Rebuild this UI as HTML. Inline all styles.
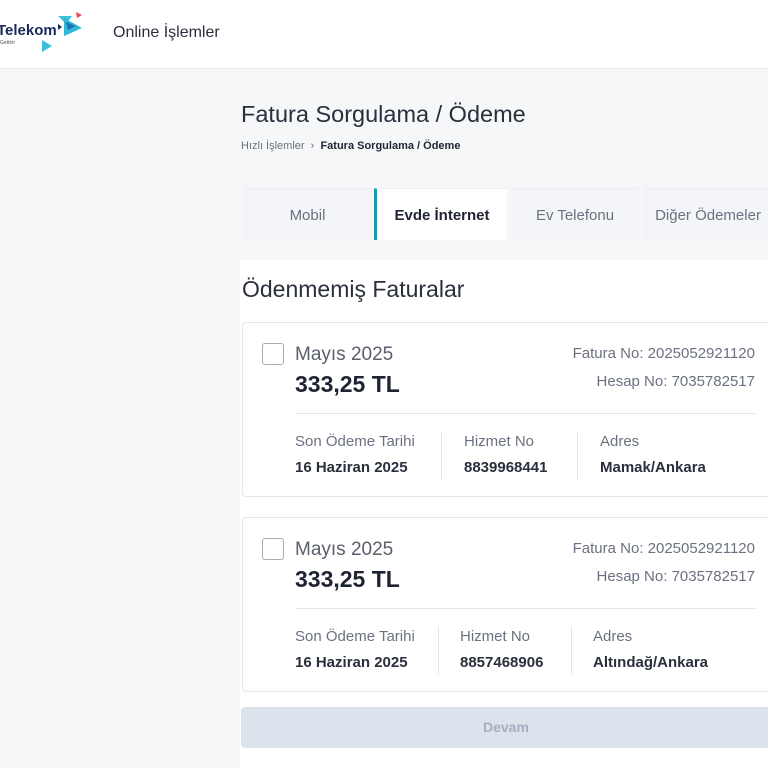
<!DOCTYPE html>
<html><head><meta charset="utf-8"><style>
*{margin:0;padding:0;box-sizing:border-box}
body{width:768px;height:768px;overflow:hidden;background:#f6f7f9;font-family:"Liberation Sans",sans-serif;color:#2a2f3c;position:relative}
.a{position:absolute;white-space:nowrap}
.hdr{left:0;top:0;width:768px;height:69px;background:#fff;border-bottom:1px solid #e6e8ec}
.tab{top:188px;height:52px;background:#f3f5f8;color:#6b7180;font-size:15px;text-align:center;line-height:54px;border-top:1px solid #eceef1}
.card{left:242px;width:540px;height:175px;background:#fff;border:1px solid #e3e6ea;border-radius:4px}
.cb{left:19px;top:20px;width:22px;height:22px;border:1.5px solid #a6abb5;border-radius:3px}
.m{left:52px;top:21px;font-size:19px;color:#5a5f6b}
.p{left:52px;top:48px;font-size:23px;font-weight:bold;color:#1f2433}
.r{right:26px;font-size:15px;color:#6b7180;text-align:right}
.hr{left:52px;top:90px;width:461px;height:1px;background:#e3e6ea}
.l{font-size:15px;color:#6b7180;top:110px}
.v{font-size:15px;color:#2a2f3c;top:136px;font-weight:bold}
.vl{top:108px;width:1px;height:48px;background:#e3e6ea}
</style></head><body>
<div class="a hdr"></div>
<div class="a" style="left:-3px;top:22px;font-size:15px;font-weight:bold;color:#1a2a5a">Telekom</div>
<div class="a" style="left:0;top:40px;font-size:5px;color:#555">Gettirir</div>
<svg class="a" style="left:50px;top:10px" width="36" height="44"><polygon points="8,6 22,6 16,14" fill="#3cc0d8"/><polygon points="14,8 32,18 14,26" fill="#2fb7d4"/><polygon points="16,12 26,16 18,20" fill="#1d72b8"/><polygon points="26,2 32,5 27,8" fill="#e84a5f"/><polygon points="8,14 12,17 8,20" fill="#1a2a5a"/></svg>
<svg class="a" style="left:42px;top:38px" width="12" height="16"><polygon points="0,2 10,8 0,14" fill="#3cc0d8"/></svg>
<div class="a" style="left:113px;top:24px;font-size:16px;color:#2a2f3c">Online İşlemler</div>
<div class="a" style="left:241px;top:101px;font-size:23.5px;color:#2a2f3c">Fatura Sorgulama / Ödeme</div>
<div class="a" style="left:241px;top:140px;font-size:11px;color:#6b7180">Hızlı İşlemler &nbsp;›&nbsp; <b style="color:#1f2433">Fatura Sorgulama / Ödeme</b></div>
<div class="a tab" style="left:243px;width:129px">Mobil</div>
<div class="a tab" style="left:374px;width:133px;background:#fff;border-left:3px solid #1b9aaa;color:#1f2433;font-weight:bold">Evde İnternet</div>
<div class="a tab" style="left:511px;width:128px">Ev Telefonu</div>
<div class="a tab" style="left:643px;width:130px">Diğer Ödemeler</div>
<div class="a" style="left:240px;top:260px;width:540px;height:508px;background:#fff"></div>
<div class="a" style="left:242px;top:276px;font-size:23px;color:#2a2f3c">Ödenmemiş Faturalar</div>

<div class="a card" style="top:322px">
<div class="a cb"></div><div class="a m">Mayıs 2025</div><div class="a p">333,25 TL</div>
<div class="a r" style="top:22px">Fatura No: 2025052921120</div>
<div class="a r" style="top:50px">Hesap No: 7035782517</div>
<div class="a hr"></div>
<div class="a l" style="left:52px">Son Ödeme Tarihi</div><div class="a v" style="left:52px">16 Haziran 2025</div>
<div class="a vl" style="left:198px"></div>
<div class="a l" style="left:221px">Hizmet No</div><div class="a v" style="left:221px">8839968441</div>
<div class="a vl" style="left:334px"></div>
<div class="a l" style="left:357px">Adres</div><div class="a v" style="left:357px">Mamak/Ankara</div>
</div>
<div class="a card" style="top:517px">
<div class="a cb"></div><div class="a m">Mayıs 2025</div><div class="a p">333,25 TL</div>
<div class="a r" style="top:22px">Fatura No: 2025052921120</div>
<div class="a r" style="top:50px">Hesap No: 7035782517</div>
<div class="a hr"></div>
<div class="a l" style="left:52px">Son Ödeme Tarihi</div><div class="a v" style="left:52px">16 Haziran 2025</div>
<div class="a vl" style="left:195px"></div>
<div class="a l" style="left:217px">Hizmet No</div><div class="a v" style="left:217px">8857468906</div>
<div class="a vl" style="left:328px"></div>
<div class="a l" style="left:350px">Adres</div><div class="a v" style="left:350px">Altındağ/Ankara</div>
</div>
<div class="a" style="left:241px;top:707px;width:540px;height:41px;background:#dde3ec;border-radius:4px;color:#a5afc2;font-size:14px;font-weight:bold;line-height:41px;padding-left:242px">Devam</div>
</body></html>
